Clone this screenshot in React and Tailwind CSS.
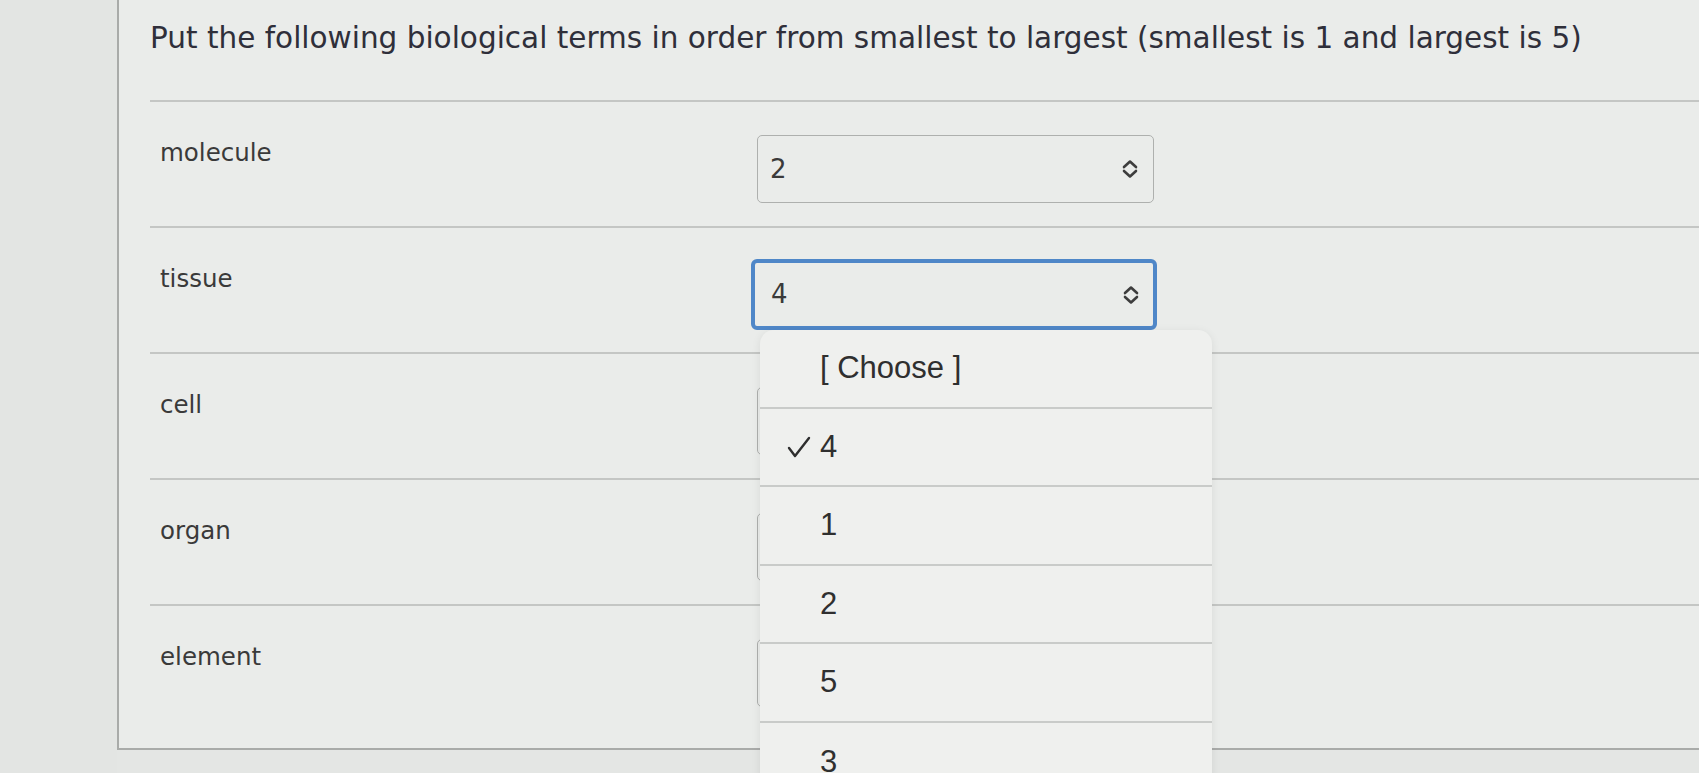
import React from "react";

const rows = [
  { label: "molecule", value: "2" },
  { label: "tissue", value: "4", focused: true },
  { label: "cell", value: "" },
  { label: "organ", value: "" },
  { label: "element", value: "" },
];

const options = ["[ Choose ]", "4", "1", "2", "5", "3"];

const Chevrons = () => (
  <svg width="18" height="20" viewBox="0 0 18 20" fill="none" stroke="#3d3d3d" strokeWidth="2.6" strokeLinecap="round" strokeLinejoin="round">
    <path d="M3 8 L9 2.5 L15 8" />
    <path d="M3 12 L9 17.5 L15 12" />
  </svg>
);

const Check = () => (
  <svg width="26" height="24" viewBox="0 0 26 24" fill="none" stroke="#2e2e2e" strokeWidth="2.4" strokeLinecap="round" strokeLinejoin="round">
    <path d="M3 13 L9 21 L23 3" />
  </svg>
);

const SelectBox = ({ value, focused }) => (
  <div
    className={
      focused
        ? "w-[406px] h-[71px] -ml-[6px] -mt-[2px] rounded-[6px] border-[4px] border-[#4f87c8] flex items-center justify-between pl-[16px] pr-[13px]"
        : "w-[397px] h-[68px] rounded-[5px] border border-[#aeb0ae] flex items-center justify-between pl-[12px] pr-[14px]"
    }
  >
    <span className="text-[26px] text-[#3a3a3a]">{value}</span>
    <Chevrons />
  </div>
);

export default function App() {
  return (
    <div
      className="w-[1699px] h-[773px] overflow-hidden bg-[#e4e6e4] flex"
      style={{ fontFamily: "'DejaVu Sans', Verdana, sans-serif" }}
    >
      <div className="w-[117px] shrink-0 bg-[#e3e5e3]" />
      <div className="relative w-[1700px] shrink-0 h-[750px] border-l-2 border-b-2 border-[#a9aba9] bg-[#eaecea] pl-[31px]">
        <h1 className="pt-[17px] h-[100px] text-[29.5px] leading-[42px] text-[#2f2f3a] whitespace-nowrap">
          Put the following biological terms in order from smallest to largest (smallest is 1 and largest is 5)
        </h1>
        {rows.map((row) => (
          <div key={row.label} className="h-[126px] border-t-2 border-[#c4c6c4] flex pt-[33px]">
            <div className="w-[607px] pl-[10px] pt-[2px] text-[24.5px] leading-[32px] text-[#3a3a3a]">
              {row.label}
            </div>
            <SelectBox value={row.value} focused={row.focused} />
          </div>
        ))}

        <div
          className="absolute left-[641px] top-[330px] w-[452px] h-[460px] rounded-[14px] bg-[#eff0ee] shadow-[0_2px_10px_rgba(0,0,0,0.08)] overflow-hidden"
          style={{ fontFamily: "'Liberation Sans', Arial, sans-serif" }}
        >
          {options.map((opt, i) => (
            <div
              key={opt}
              className={
                "h-[78.5px] flex items-center text-[31px] text-[#2f2f2f] " +
                (i < options.length - 1 ? "border-b-2 border-[#c9cbc9]" : "")
              }
            >
              <div className="w-[60px] flex justify-end pr-[8px]">{i === 1 && <Check />}</div>
              <span>{opt}</span>
            </div>
          ))}
        </div>
      </div>
    </div>
  );
}
